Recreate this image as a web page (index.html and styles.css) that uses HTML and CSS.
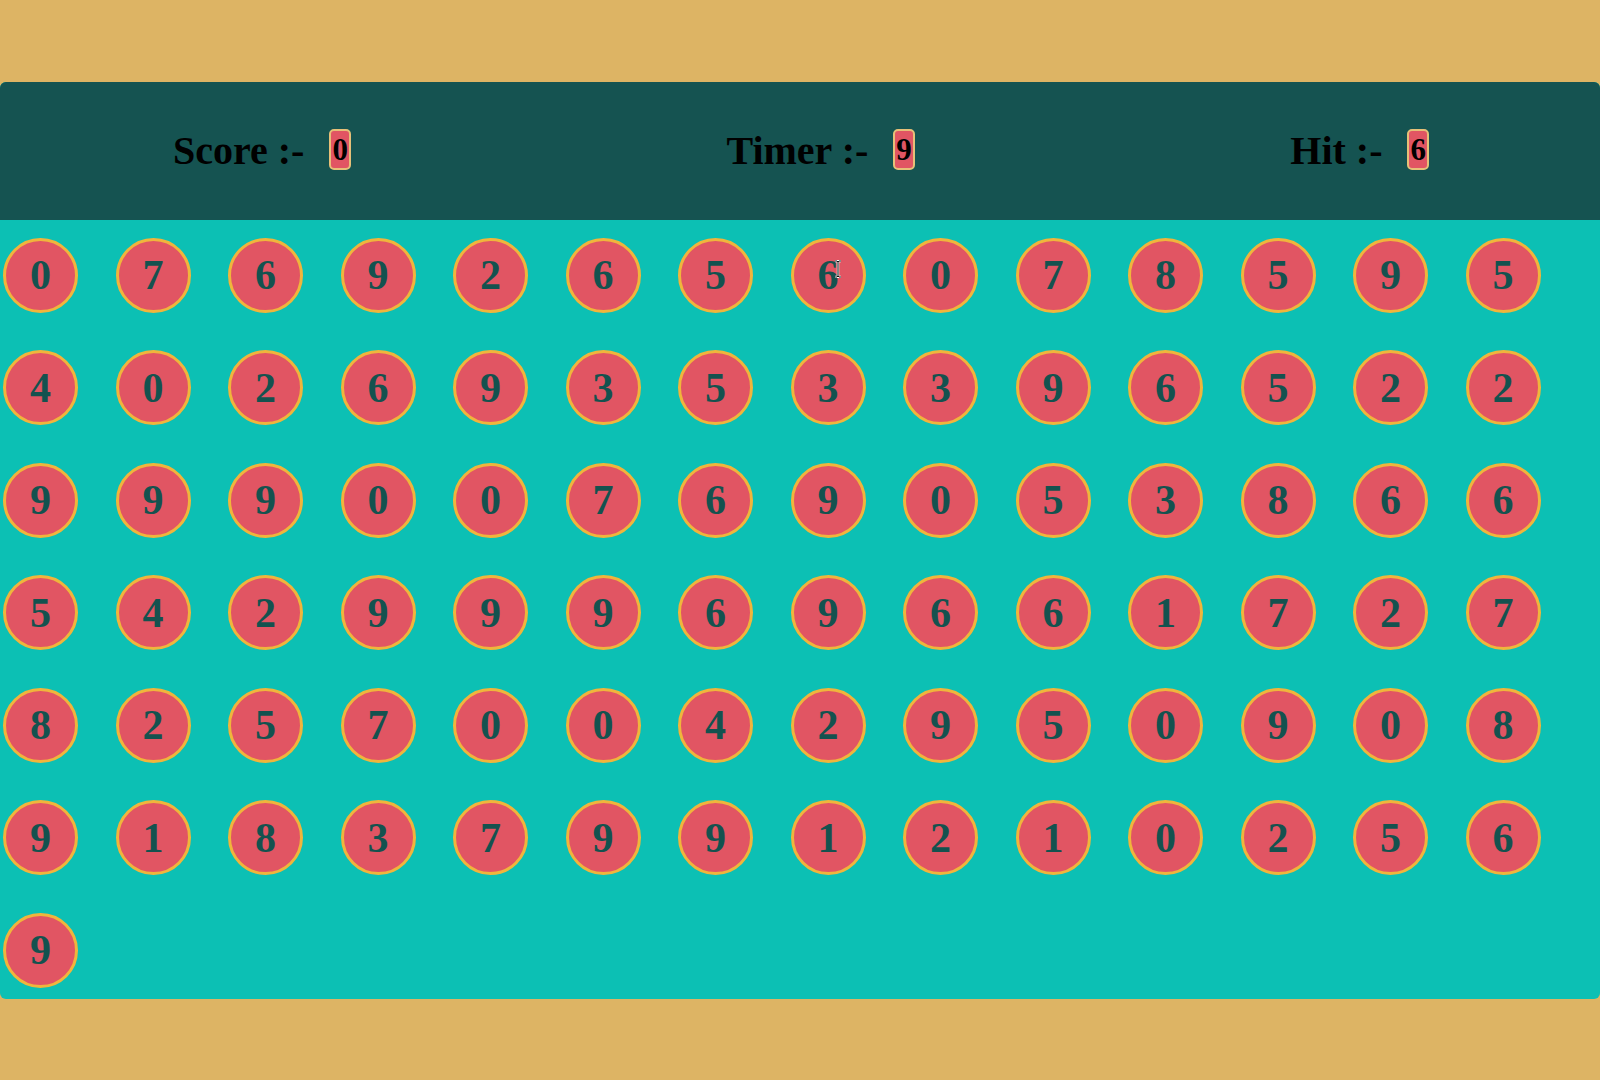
FILE: index.html
```html
<!DOCTYPE html>
<html>
<head>
<meta charset="utf-8">
<link rel="stylesheet" href="styles.css">
</head>
<body>
<div class="panel">
  <div class="top">
    <div class="stat"><span class="label">Score :-</span><span class="box">0</span></div>
    <div class="stat"><span class="label">Timer :-</span><span class="box">9</span></div>
    <div class="stat"><span class="label">Hit :-</span><span class="box">6</span></div>
  </div>
  <div class="bottom" id="bubbles"></div>
  <svg class="cursor" width="8" height="18" viewBox="0 0 8 18"><path d="M1 1h2l1 1 1-1h2M4 2v14M1 17h2l1-1 1 1h2" fill="none" stroke="#fff" stroke-width="2.4"/><path d="M1 1h2l1 1 1-1h2M4 2v14M1 17h2l1-1 1 1h2" fill="none" stroke="#111" stroke-width="1"/></svg>
</div>
<script src="script.js"></script>
</body>
</html>
```
FILE: script.js
```js
var all = "07692656078595" + "40269353396522" + "99900769053866" + "54299969661727" + "82570042950908" + "91837991210256" + "9";
var html = "";
for (var i = 0; i < all.length; i++) {
  html += '<div class="bubble">' + all[i] + '</div>';
}
document.getElementById("bubbles").innerHTML = html;
```
FILE: styles.css
```css
* { box-sizing: border-box; }
html, body { margin: 0; padding: 0; }
body {
  width: 1600px;
  height: 1080px;
  background: #ddb464;
  display: flex;
  align-items: center;
  justify-content: center;
  font-family: "Liberation Serif", "Times New Roman", serif;
}
.panel {
  position: relative;
  width: 100%;
  height: 917px;
  border-radius: 6px;
  overflow: hidden;
  background: #0cc0b4;
  display: flex;
  flex-direction: column;
}
.top {
  height: 138px;
  flex: none;
  background: #155351;
  display: flex;
  align-items: center;
  justify-content: space-between;
  padding: 0 171px 0 173px;
}
.stat {
  display: flex;
  align-items: center;
  gap: 25px;
}
.label {
  font-size: 40px;
  font-weight: bold;
  color: #000;
  line-height: 40px;
}
.box {
  display: inline-block;
  background: #e15563;
  border: 2px solid #e6c078;
  border-radius: 5px;
  font-size: 31px;
  font-weight: bold;
  line-height: 37px;
  padding: 0 1px;
  color: #000;
  margin-top: -2px;
}
.bottom {
  flex: 1;
  display: flex;
  flex-wrap: wrap;
  align-content: flex-start;
  gap: 37.5px;
  padding: 18px 3px 0 3px;
}
.bubble {
  width: 75px;
  height: 75px;
  border-radius: 50%;
  background: #e15563;
  border: 3px solid #f0b53c;
  display: flex;
  align-items: center;
  justify-content: center;
  font-size: 42px;
  font-weight: bold;
  color: #14524f;
  line-height: 1;
}
.cursor {
  position: absolute;
  left: 834px;
  top: 178px;
}
```
